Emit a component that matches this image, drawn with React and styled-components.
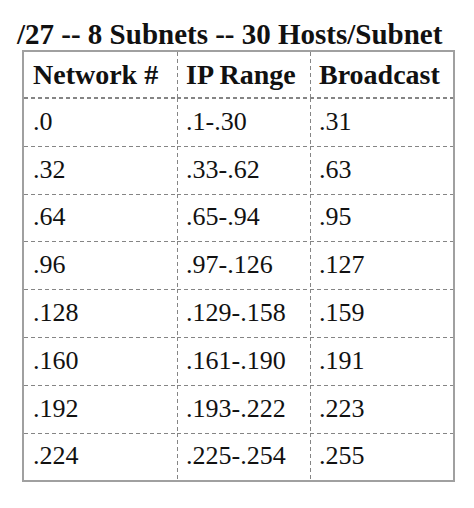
import React from 'react';
import styled, { createGlobalStyle, css } from 'styled-components';

const GlobalStyle = createGlobalStyle`
  body {
    margin: 0;
    background: #ffffff;
    font-family: "Liberation Serif", "Times New Roman", serif;
    color: #111;
  }
`;

const dashTop = 'linear-gradient(to right, #858585 4px, transparent 4px) left top / 7px 1px repeat-x';
const dashBottom = 'linear-gradient(to right, #858585 4px, transparent 4px) left bottom / 7px 1px repeat-x';
const dashLeft = 'linear-gradient(to bottom, #858585 4px, transparent 4px) left top / 1px 7px repeat-y';

const Page = styled.div`
  width: 474px;
  height: 508px;
  padding: 18px 0 0 17px;
  box-sizing: border-box;
`;

const Title = styled.h1`
  margin: 0;
  font-size: 29px;
  font-weight: 700;
  line-height: 32px;
  white-space: nowrap;
  color: #111;
`;

const Table = styled.table`
  margin: 0 0 0 5px;
  border-collapse: collapse;
  table-layout: fixed;
  width: 431px;
  border: 2px solid #a0a0a0;
`;

const cellBase = css`
  padding: 0 0 0 9px;
  text-align: left;
  white-space: nowrap;
  vertical-align: middle;
`;

const HeadCell = styled.th`
  ${cellBase}
  height: 46px;
  font-size: 28px;
  font-weight: 700;
  background: ${(p) => (p.$first ? dashBottom : `${dashBottom}, ${dashLeft}`)};
`;

const Cell = styled.td`
  ${cellBase}
  height: 47.8px;
  font-size: 26px;
  background: ${(p) => (p.$first ? dashTop : `${dashTop}, ${dashLeft}`)};
`;

const rows = [
  ['.0', '.1-.30', '.31'],
  ['.32', '.33-.62', '.63'],
  ['.64', '.65-.94', '.95'],
  ['.96', '.97-.126', '.127'],
  ['.128', '.129-.158', '.159'],
  ['.160', '.161-.190', '.191'],
  ['.192', '.193-.222', '.223'],
  ['.224', '.225-.254', '.255'],
];

export default function App() {
  return (
    <Page>
      <GlobalStyle />
      <Title>/27 -- 8 Subnets -- 30 Hosts/Subnet</Title>
      <Table>
        <colgroup>
          <col style={{ width: 154 }} />
          <col style={{ width: 133 }} />
          <col style={{ width: 144 }} />
        </colgroup>
        <thead>
          <tr>
            <HeadCell $first>Network #</HeadCell>
            <HeadCell>IP Range</HeadCell>
            <HeadCell>Broadcast</HeadCell>
          </tr>
        </thead>
        <tbody>
          {rows.map((r) => (
            <tr key={r[0]}>
              {r.map((v, i) => (
                <Cell key={i} $first={i === 0}>{v}</Cell>
              ))}
            </tr>
          ))}
        </tbody>
      </Table>
    </Page>
  );
}
